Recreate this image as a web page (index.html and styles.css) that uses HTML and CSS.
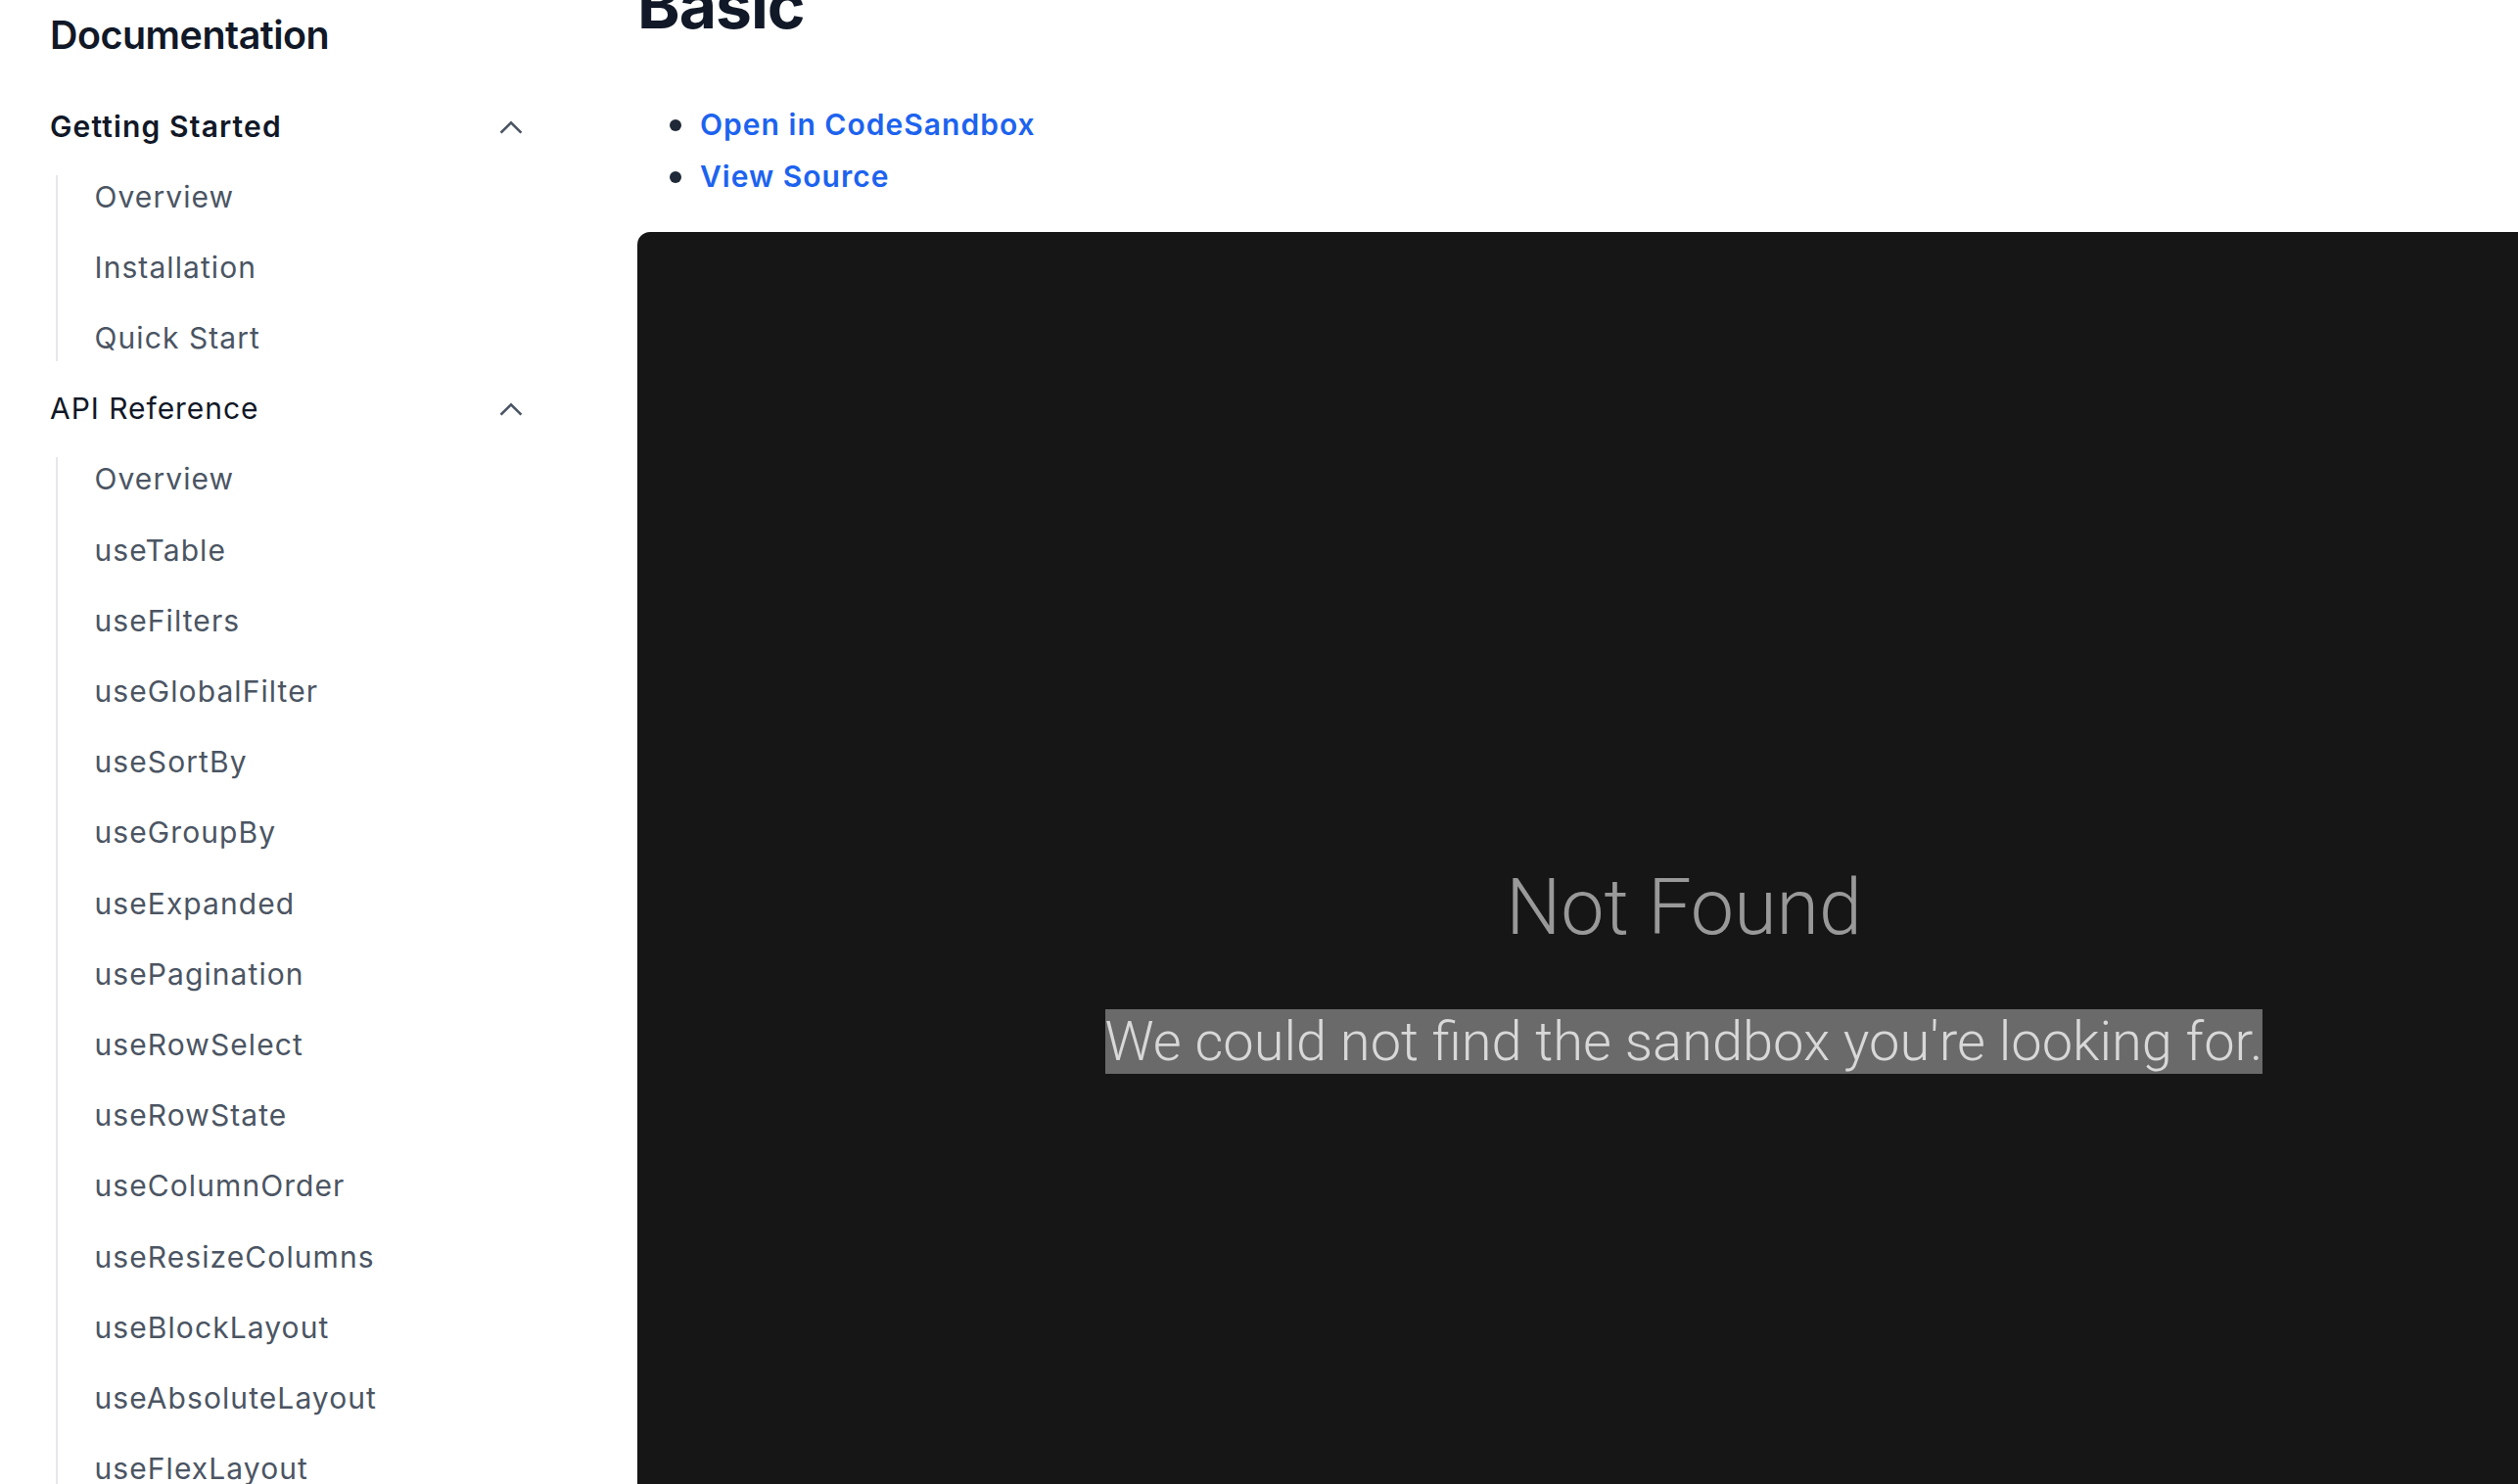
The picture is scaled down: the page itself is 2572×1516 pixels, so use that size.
FILE: index.html
```html
<!DOCTYPE html>
<html lang="en">
<head>
<meta charset="utf-8">
<title>Basic</title>
<link rel="stylesheet" href="styles.css">
</head>
<body>
<div class="page">
  <aside class="sidebar">
    <div class="brand">Documentation</div>
    <nav class="nav">
      <div class="section">
        <div class="section-head active">
          <span>Getting Started</span>
          <svg class="chev" viewBox="0 0 26 26" aria-hidden="true"><polyline points="3.5,17.75 13,8.25 22.5,17.75"/></svg>
        </div>
        <ul class="sub">
          <li>Overview</li>
          <li>Installation</li>
          <li>Quick Start</li>
        </ul>
      </div>
      <div class="section">
        <div class="section-head">
          <span>API Reference</span>
          <svg class="chev" viewBox="0 0 26 26" aria-hidden="true"><polyline points="3.5,17.75 13,8.25 22.5,17.75"/></svg>
        </div>
        <ul class="sub">
          <li>Overview</li>
          <li>useTable</li>
          <li>useFilters</li>
          <li>useGlobalFilter</li>
          <li>useSortBy</li>
          <li>useGroupBy</li>
          <li>useExpanded</li>
          <li>usePagination</li>
          <li>useRowSelect</li>
          <li>useRowState</li>
          <li>useColumnOrder</li>
          <li>useResizeColumns</li>
          <li>useBlockLayout</li>
          <li>useAbsoluteLayout</li>
          <li>useFlexLayout</li>
          <li>useTokenPagination</li>
        </ul>
      </div>
    </nav>
  </aside>
  <main class="content">
    <h1 class="title">Basic</h1>
    <ul class="links">
      <li><a href="#">Open in CodeSandbox</a></li>
      <li><a href="#">View Source</a></li>
    </ul>
    <div class="sandbox">
      <div class="nf-title">Not Found</div>
      <div class="nf-text"><span class="sel">We could not find the sandbox you're looking for.</span></div>
    </div>
  </main>
</div>
</body>
</html>
```

FILE: styles.css
```css
html, body {
  margin: 0;
  padding: 0;
  background: #ffffff;
  overflow: hidden;
  height: 100%;
}

body {
  font-family: Inter, "Noto Sans", "Liberation Sans", sans-serif;
  color: #111827;
}

.page {
  display: flex;
  align-items: flex-start;
  width: 2572px;
  height: 1516px;
  overflow: hidden;
}

/* Sidebar */
.sidebar {
  flex: 0 0 auto;
  width: 480px;
  padding: 9.75px 120px 0 51px;
  display: flex;
  flex-direction: column;
  gap: 44.3px;
}

.brand {
  font-size: 39.4px;
  line-height: 52.5px;
  font-weight: 600;
  color: #111827;
  letter-spacing: -0.012em;
}

.nav {
  display: flex;
  flex-direction: column;
  gap: 26.25px;
}

.section {
  display: flex;
  flex-direction: column;
  gap: 26.25px;
}

.section-head {
  display: flex;
  align-items: center;
  justify-content: space-between;
  font-size: 30px;
  line-height: 45.93px;
  font-weight: 400;
  letter-spacing: 0.032em;
  color: #111827;
}

.section-head.active {
  font-weight: 600;
  letter-spacing: 0.038em;
}

.chev {
  width: 26px;
  height: 26px;
  margin-right: -4px;
  fill: none;
  stroke: #4b5563;
  stroke-width: 2.6;
  stroke-linecap: square;
  stroke-linejoin: miter;
}

.sub {
  list-style: none;
  margin: 0 0 0 6px;
  padding: 0 0 0 37.5px;
  border-left: 2px solid #e5e7eb;
  display: flex;
  flex-direction: column;
  gap: 26.25px;
}

.sub li {
  font-size: 30px;
  line-height: 45.93px;
  letter-spacing: 0.036em;
  color: #4b5563;
  white-space: nowrap;
}

/* Main */
.content {
  flex: 0 0 auto;
  width: 2138px;
  display: flex;
  flex-direction: column;
}

.title {
  margin: -27.95px 0 0 0;
  font-size: 66px;
  line-height: 66px;
  font-weight: 700;
  letter-spacing: -0.015em;
  color: #111827;
}

.links {
  list-style: none;
  margin: 66.95px 0 0 0;
  padding: 0 0 0 33px;
  display: flex;
  flex-direction: column;
  gap: 6.6px;
}

.links li {
  display: flex;
  align-items: center;
  font-size: 30px;
  line-height: 45.93px;
}

.links li::before {
  content: "";
  width: 12px;
  height: 12px;
  border-radius: 50%;
  background: #1f2937;
  margin-right: 19px;
  flex: 0 0 auto;
}

.links a {
  color: #1d63ef;
  font-weight: 600;
  letter-spacing: 0.034em;
  text-decoration: none;
}

.sandbox {
  margin-top: 33.5px;
  width: 2138px;
  height: 1400px;
  background: #161616;
  border-radius: 13px;
  padding-top: 642.6px;
  box-sizing: border-box;
  display: flex;
  flex-direction: column;
  align-items: center;
  font-family: Roboto, "Liberation Sans", sans-serif;
}

.nf-title {
  font-size: 79px;
  line-height: 1.2;
  font-weight: 300;
  color: #999999;
}

.nf-text {
  margin-top: 56.6px;
  font-size: 56px;
  font-weight: 300;
  color: #d8d8d8;
}

.sel {
  background: #6a6a6a;
}
```
